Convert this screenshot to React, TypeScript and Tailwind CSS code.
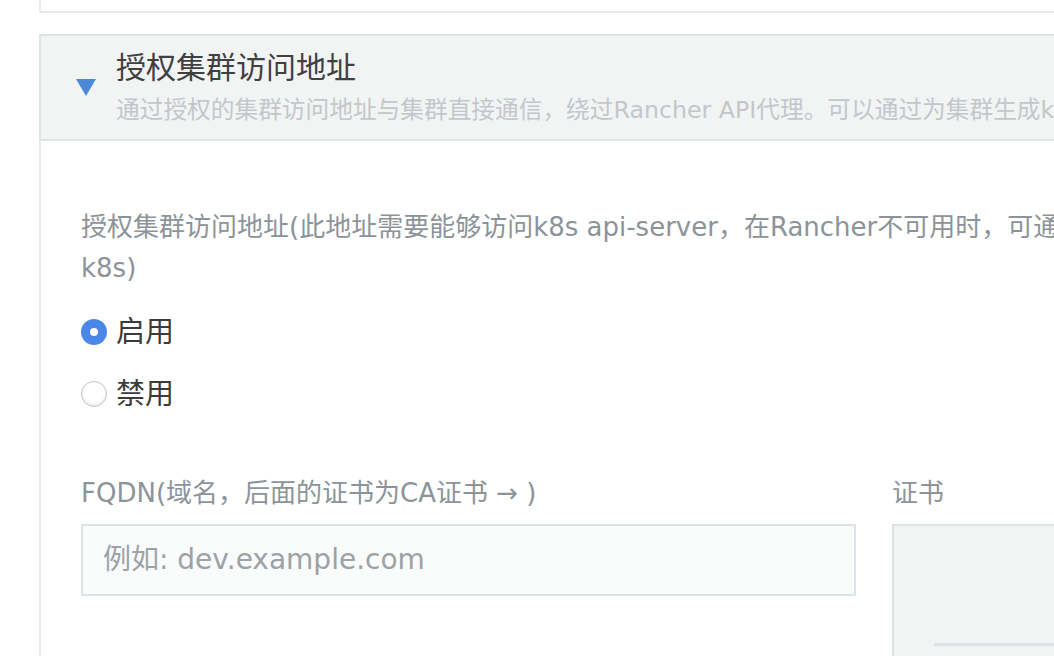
import React from 'react';

const Radio: React.FC<{ checked?: boolean; label: string }> = ({ checked, label }) => {
  return (
    <label className="flex h-[62px] items-center gap-[9px]">
      {checked ? (
        <span className="flex h-[26px] w-[26px] items-center justify-center rounded-full bg-[#4b87e6]">
          <span className="h-[8px] w-[8px] rounded-full bg-white" />
        </span>
      ) : (
        <span className="h-[26px] w-[26px] rounded-full border border-[#c4c4c4] bg-white shadow-[inset_0_-2px_3px_rgba(0,0,0,0.08)]" />
      )}
      <span className="text-[29px] leading-[40px] text-[#3b3b3b]">{label}</span>
    </label>
  );
};

const App: React.FC = () => {
  return (
    <div className="h-[656px] w-full overflow-hidden bg-white pl-[39px] font-['DejaVu_Sans','Noto_Sans_CJK_SC',sans-serif]">
      <div className="h-[13px] w-[1200px] border-b-2 border-l-2 border-[#e8ebed] bg-white" />

      <div className="mt-[21px] w-[1700px]">
        <div className="box-border flex h-[107px] items-center border-2 border-r-0 border-[#dfe3e6] bg-[#f2f4f4] pl-[35px]">
          <svg width="20" height="17" viewBox="0 0 20 17" className="shrink-0">
            <polygon points="0,0 20,0 10,17" fill="#4a89d4" />
          </svg>
          <div className="ml-[20px] flex flex-col whitespace-nowrap">
            <h3 className="text-[30px] leading-[36px] text-[#404040]">授权集群访问地址</h3>
            <p className="mt-[8px] text-[23.7px] leading-[32px] text-[#c3c7cb]">
              通过授权的集群访问地址与集群直接通信，绕过Rancher API代理。可以通过为集群生成kubeconfig文件来使用授权的集群访问地址。
            </p>
          </div>
        </div>

        <div className="border-l-2 border-[#e8ebed] pl-[40px] pt-[66px] pb-10">
          <p className="text-[26px] leading-[41px] text-[#8c9399] whitespace-nowrap">
            授权集群访问地址(此地址需要能够访问k8s api-server，在Rancher不可用时，可通过此地址直接访问
            <br />
            k8s)
          </p>

          <div className="mt-[12px] flex flex-col">
            <Radio checked label="启用" />
            <Radio label="禁用" />
          </div>

          <div className="mt-[51px] flex gap-[36px]">
            <div className="w-[775px]">
              <div className="text-[26px] leading-[34px] text-[#8c9399]">FQDN(域名，后面的证书为CA证书 → )</div>
              <div className="mt-[14px] flex h-[72px] items-center border-2 border-[#dde2e6] bg-[#fafbfb] pl-[20px] text-[28px] text-[#9ca2a7]">
                例如: dev.example.com
              </div>
            </div>
            <div className="w-[775px]">
              <div className="text-[26px] leading-[34px] text-[#8c9399]">证书</div>
              <div className="mt-[14px] h-[200px] border-2 border-[#dde2e6] bg-[#f2f4f4] pl-[40px] pt-[117px]">
                <div className="h-[3px] w-full bg-[#dde2e6]" />
              </div>
            </div>
          </div>
        </div>
      </div>
    </div>
  );
};

export default App;
